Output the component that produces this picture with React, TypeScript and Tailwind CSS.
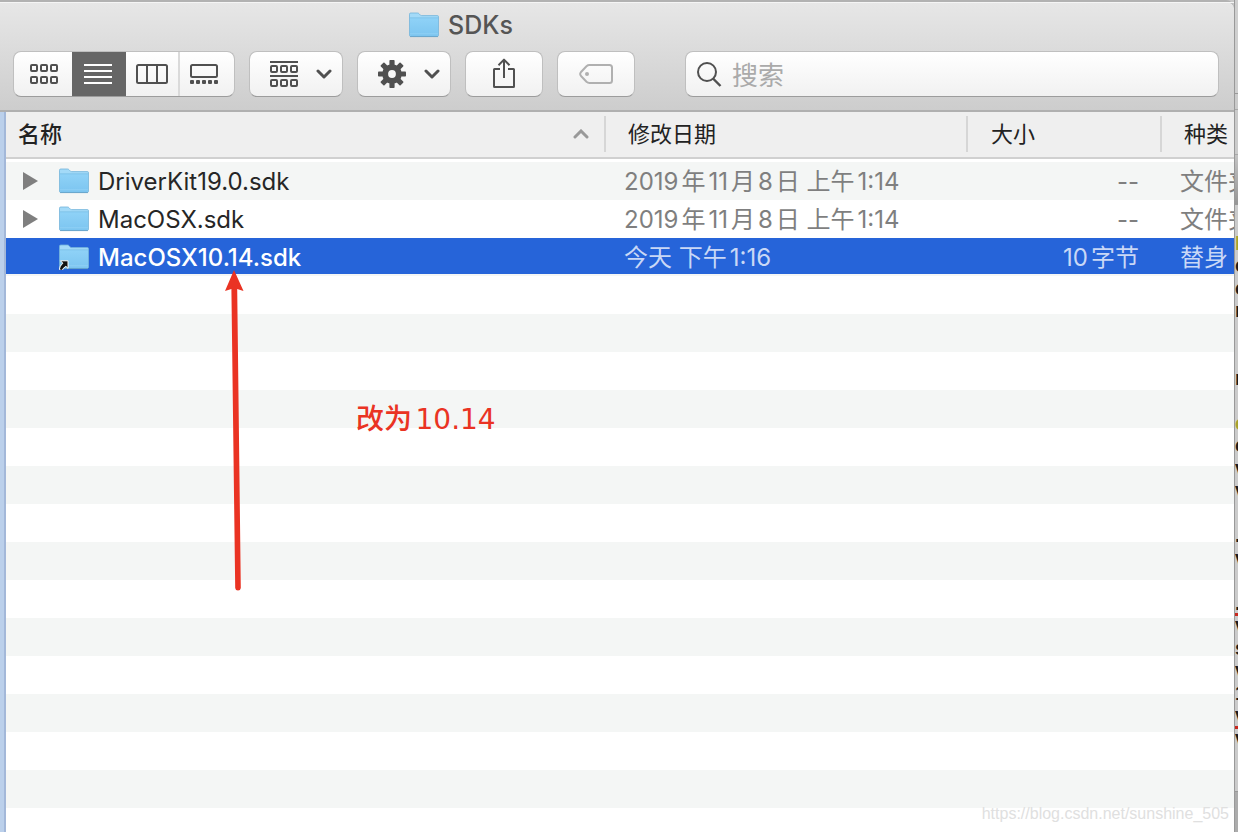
import type { ReactNode } from "react"
import clsx from "clsx"

const files = [
    { name: "DriverKit19.0.sdk", date: "2019年11月8日 上午1:14", size: "--", kind: "文件夹", alias: false },
    { name: "MacOSX.sdk", date: "2019年11月8日 上午1:14", size: "--", kind: "文件夹", alias: false },
    { name: "MacOSX10.14.sdk", date: "今天 下午1:16", size: "10字节", kind: "替身", alias: true },
]

// slice of the editor that peeks out behind the window
const editorLines = [
    { text: "B", olive: true }, { text: "c" }, { text: "e" }, { text: "n" }, { text: "" }, { text: "" },
    { text: "n" }, { text: "" }, { text: "c", olive: true }, { text: "e" }, { text: "v" }, { text: "v" },
    { text: "" }, { text: "." }, { text: "v" }, { text: "" }, { text: "." }, { text: "v", error: true },
    { text: "s" }, { text: "v" }, { text: "1" }, { text: "v" }, { text: "v", error: true },
]

const Folder = ({ alias = false }: { alias?: boolean }) => (
    <svg width="30" height="26" viewBox="0 0 30 26" className="shrink-0">
        <defs>
            <linearGradient id="folder" x1="0" y1="0" x2="0" y2="1">
                <stop offset="0" stopColor="#8fd2f7" />
                <stop offset="1" stopColor="#7cc5f0" />
            </linearGradient>
        </defs>
        <path d="M0.5 2.2Q0.5 1 1.7 1H8.6Q9.4 1 10 1.7L11.4 3.2Q11.8 3.6 12.6 3.6H28.4Q29.5 3.6 29.5 4.8V23Q29.5 24.4 28.2 24.4H1.8Q0.5 24.4 0.5 23Z" fill="#a3daf8" stroke="#72b4da" strokeWidth="0.8" />
        <path d="M1 6H29V23Q29 24 28 24H2Q1 24 1 23Z" fill="url(#folder)" />
        <path d="M1 5.8H29" stroke="#78bfe6" strokeWidth="0.8" />
        <path d="M1 21.8H29" stroke="#93d2f5" strokeWidth="0.8" />
        <path d="M1 24.6H29" stroke="#5f9dc4" strokeWidth="0.8" />
        {alias && (
            <path d="M1.5 16.8H9V24.4L6.9 22.3Q4 23.8 3.2 26.5L0.2 25.8Q0.6 22 3.8 19.2Z" fill="#111" stroke="#fff" strokeWidth="1" />
        )}
    </svg>
)

const squares = (y: number) => [1, 11, 21].map((x) => <rect key={x} x={x} y={y} width="6" height="6" rx="1" />)

const Chevron = () => (
    <svg width="16" height="10" viewBox="0 0 16 10" fill="none" stroke="#505050" strokeWidth="3" strokeLinecap="round" strokeLinejoin="round">
        <path d="M2 2L8 8L14 2" />
    </svg>
)

const Tool = ({ label, className, children }: { label: string; className?: string; children: ReactNode }) => (
    <button
        aria-label={label}
        className={clsx("flex h-[46px] shrink-0 items-center justify-center rounded-lg border border-[#bfbfbf] border-b-[#9c9c9c] bg-linear-to-b from-white to-[#f1f1f1]", className)}
    >
        {children}
    </button>
)

const Toolbar = () => (
    <div className="flex px-[13px] pt-[3px] pr-[15px] pb-[13px]">
        <div className="mr-3.5 flex h-[46px] shrink-0 overflow-hidden rounded-lg border border-[#bfbfbf] border-b-[#9c9c9c] bg-linear-to-b from-white to-[#f1f1f1]">
            <button aria-label="图标" className="flex w-[58px] items-center justify-center pl-0.5">
                <svg width="28" height="20" fill="none" stroke="#505050" strokeWidth="2">{squares(1)}{squares(13)}</svg>
            </button>
            <button aria-label="列表" className="flex w-[54px] items-center justify-center bg-[#666] pr-0.5">
                <svg width="28" height="20" stroke="#fff" strokeWidth="2">
                    <path d="M0 1H28M0 7H28M0 13H28M0 19H28" />
                </svg>
            </button>
            <button aria-label="分栏" className="flex w-[52px] items-center justify-center">
                <svg width="32" height="20" fill="none" stroke="#505050" strokeWidth="2">
                    <rect x="1" y="1" width="30" height="18" rx="1.5" />
                    <path d="M11 1V19M21 1V19" />
                </svg>
            </button>
            <button aria-label="画廊" className="flex w-14 items-center justify-center border-l-2 border-[#dadada] pr-1.5">
                <svg width="28" height="20" fill="none" stroke="#505050" strokeWidth="2">
                    <rect x="1" y="1" width="26" height="12" rx="1.5" />
                    <g fill="#505050" stroke="none">
                        {[0, 6, 12, 18, 24].map((x) => <rect key={x} x={x} y="16" width="4" height="4" rx="1" />)}
                    </g>
                </svg>
            </button>
        </div>
        <Tool label="分组" className="mr-3.5 w-[94px] gap-[18px] pl-2.5">
            <svg width="28" height="26" fill="none" stroke="#505050" strokeWidth="2">
                <path d="M0 1H28M0 15H28" />
                {squares(5)}{squares(19)}
            </svg>
            <Chevron />
        </Tool>
        <Tool label="操作" className="mr-3.5 w-[94px] gap-[18px] pl-2.5">
            <svg width="28" height="28" viewBox="-14 -14 28 28" fill="#505050">
                {[0, 45, 90, 135].map((a) => <rect key={a} x="-2.6" y="-14" width="5.2" height="28" rx="0.8" transform={`rotate(${a})`} />)}
                <circle r="6.8" fill="none" stroke="#505050" strokeWidth="6" />
                <circle r="3.9" fill="#f8f8f8" />
            </svg>
            <Chevron />
        </Tool>
        <Tool label="共享" className="mr-3.5 w-[78px]">
            <svg width="24" height="32" fill="none" stroke="#505050" strokeWidth="2" strokeLinejoin="round">
                <path d="M8 11H2.5Q2 11 2 11.5V28.5Q2 29 2.5 29H21.5Q22 29 22 28.5V11.5Q22 11 21.5 11H16" />
                <path d="M12 20V2M6.5 7.2L12 1.6L17.5 7.2" />
            </svg>
        </Tool>
        <Tool label="标签" className="mr-[50px] w-[78px]">
            <svg width="34" height="20" fill="none" stroke="#b0b0b0" strokeWidth="2" strokeLinejoin="round">
                <path d="M10.5 1H30.5Q33 1 33 3.5V16.5Q33 19 30.5 19H10.5Q8.8 19 7.5 17.8L2 12Q0.4 10 2 8L7.5 2.2Q8.8 1 10.5 1Z" />
                <circle cx="8" cy="10" r="2" fill="#b0b0b0" stroke="none" />
            </svg>
        </Tool>
        <label className="flex h-[46px] min-w-0 flex-1 items-center gap-2.5 rounded-lg border border-[#bfbfbf] border-b-[#9c9c9c] bg-linear-to-b from-white to-[#f1f1f1] pl-2.5">
            <svg width="26" height="26" fill="none" stroke="#505050" strokeWidth="2" className="shrink-0">
                <circle cx="11" cy="11" r="9" />
                <path d="M17 17.5L24.5 25" strokeWidth="2.4" />
            </svg>
            <input type="text" aria-label="搜索" placeholder="搜索" className="min-w-0 flex-1 bg-transparent pt-1 text-[26px] leading-8 outline-none placeholder:text-[#aaa]" />
        </label>
    </div>
)

const headCell = "relative p-0 text-left font-normal before:absolute before:top-1 before:-left-px before:h-9 before:w-0.5 before:bg-[#d6d6d6]"

const FileList = () => (
    <table className="w-full table-fixed border-collapse text-2xl">
        <thead>
            <tr className="h-[46px] border-b-2 border-[#d0d0d0] bg-[#efefef] text-[22px] text-[#222]">
                <th scope="col" aria-sort="ascending" className="p-0 text-left font-medium">
                    <div className="flex items-center justify-between pr-4 pl-3">
                        名称
                        <svg width="16" height="10" fill="none" stroke="#999" strokeWidth="3" strokeLinecap="round">
                            <path d="M2 8L8 2L14 8" />
                        </svg>
                    </div>
                </th>
                <th scope="col" className={clsx(headCell, "w-[362px]")}><div className="pl-[23px]">修改日期</div></th>
                <th scope="col" className={clsx(headCell, "w-[194px]")}><div className="pl-6">大小</div></th>
                <th scope="col" className={clsx(headCell, "w-[73px]")}><div className="pl-[23px] whitespace-nowrap">种类</div></th>
            </tr>
        </thead>
        <tbody>
            <tr className="h-1"><td colSpan={4} className="p-0"></td></tr>
            {files.map((file) => (
                <tr
                    key={file.name}
                    className={clsx(
                        "h-[38px] [text-autospace:normal]",
                        file.alias
                            ? "bg-[#f4f6f5] bg-linear-to-b from-[#2664d9] from-[36px] to-transparent to-[36px] text-[#c9d8f6]"
                            : "text-[#7f7f7f] odd:bg-white even:bg-[#f4f6f5]"
                    )}
                >
                    <td className="p-0">
                        <div className={clsx("flex items-center pl-4", file.alias ? "font-medium text-white" : "text-[#262626]")}>
                            <span className="flex w-[37px] shrink-0">
                                {!file.alias && <svg width="16" height="18" className="ml-px"><path d="M0 0L15 9L0 18Z" fill="#7f7f7f" /></svg>}
                            </span>
                            <Folder alias={file.alias} />
                            <span className="pt-0.5 pl-[9px] leading-9">{file.name}</span>
                        </div>
                    </td>
                    <td className="p-0 pt-0.5 pl-[19px] leading-9 whitespace-nowrap">{file.date}</td>
                    <td className="p-0 pt-0.5 pr-[22px] text-right leading-9 whitespace-nowrap">{file.size}</td>
                    <td className="overflow-hidden p-0 pt-0.5 pl-[19px] leading-9 whitespace-nowrap">{file.kind}</td>
                </tr>
            ))}
        </tbody>
    </table>
)

const Backdrop = () => (
    <div aria-hidden="true" className="flex w-1 shrink-0 flex-col overflow-hidden border-l border-[#999] bg-[#cbcbcb] font-['Liberation_Sans'] text-[20px] font-bold text-[#1c1c1c]">
        <div className="h-[94px] shrink-0 border-b border-[#999] bg-[#cfcfcf]"></div>
        <div className="h-[16px] shrink-0 border-b border-[#aaa]"></div>
        <div className="h-[45px] shrink-0 border-b border-[#aaa]"></div>
        <div className="h-[50px] shrink-0 border-b border-[#999] bg-linear-to-b from-[#c4c4c4] to-[#969696]"></div>
        <div className="h-[26px] shrink-0"></div>
        {editorLines.map((line, i) => (
            <div
                key={i}
                className={clsx(
                    "shrink-0 border-t-3 leading-[19px] odd:h-[23px] even:h-[22px]",
                    line.error ? "border-[#c8281e]" : "border-transparent",
                    line.olive && "text-[#a5a22c]"
                )}
            >
                {line.text}
            </div>
        ))}
        <div className="h-[43px] shrink-0"></div>
        <div className="flex-1 border-t border-[#999] bg-[#acacac]"></div>
    </div>
)

const App = () => {
    return (
        <div className="relative flex h-screen overflow-hidden bg-[#c9c9c9] font-[Inter,'Noto_Sans_CJK_SC',sans-serif]">
            <main className="flex min-w-0 flex-1 flex-col overflow-hidden">
                <header className="rounded-tr-lg border-t-2 border-b-2 border-t-[#b2b2b2] border-b-[#b0b0b0] bg-linear-to-b from-[#e7e7e7] to-[#cdcdcd]">
                    <div className="flex h-[46px] items-center gap-[9px] border-t border-[#f5f5f5] pb-0.5 pl-[409px]">
                        <Folder />
                        <h1 className="text-[25px] leading-8 font-medium text-[#555]">SDKs</h1>
                    </div>
                    <Toolbar />
                </header>
                <div className="flex min-h-0 flex-1 border-l-4 border-[#bbd0eb] bg-white">
                    <div className="flex min-w-0 flex-1 flex-col overflow-hidden border-l-2 border-[#a3b8d9]">
                        <FileList />
                        <div className="flex-1 bg-[repeating-linear-gradient(#fff_0_38px,#f4f6f5_38px_76px)]"></div>
                    </div>
                </div>
            </main>
            <Backdrop />

            {/* annotation */}
            <svg width="24" height="322" className="absolute top-[270px] left-[223px]" fill="#ea3323">
                <path d="M11 0L20.5 21L14.2 19L17.8 318Q17.5 320.5 15 320.5Q12.5 320.5 12.2 318L8.4 19L2 21Z" />
            </svg>
            <p className="absolute top-[402px] left-[356px] font-['DejaVu_Sans','Noto_Sans_CJK_SC',sans-serif] text-[28px] leading-9 font-medium text-[#ea3323] [text-autospace:normal]">改为10.14</p>
            <p className="absolute right-[9px] bottom-[6px] font-['Liberation_Sans',sans-serif] text-base leading-6 text-[#e0e0e0]">https://blog.csdn.net/sunshine_505</p>
        </div>
    )
}
export default App
